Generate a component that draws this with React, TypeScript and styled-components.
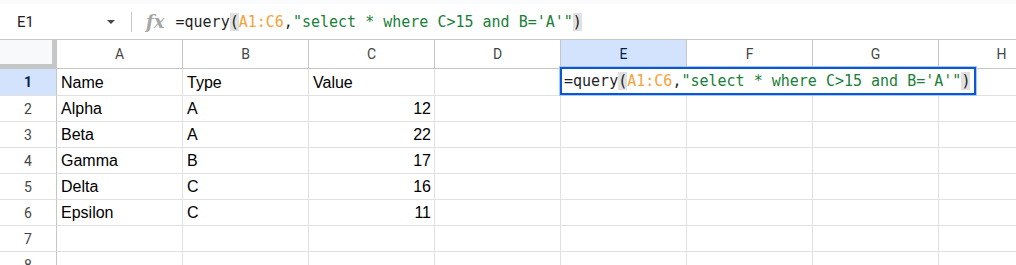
import React from 'react';
import styled, { createGlobalStyle } from 'styled-components';

const GlobalStyle = createGlobalStyle`
  html, body {
    margin: 0;
    padding: 0;
    background: #ffffff;
    overflow: hidden;
  }
  * { box-sizing: border-box; }
`;

const Page = styled.div`
  width: 1016px;
  height: 265px;
  overflow: hidden;
  font-family: Roboto, "Liberation Sans", Arial, sans-serif;
`;

const TopStrip = styled.div`
  height: 4px;
  background: #f9fbfd;
`;

const FormulaBar = styled.div`
  height: 36px;
  display: flex;
  align-items: center;
  border-bottom: 1px solid #c4c7c5;
  background: #ffffff;
`;

const NameBox = styled.div`
  width: 131px;
  display: flex;
  align-items: center;
  justify-content: space-between;
  padding: 0 16px 0 17px;
  font-size: 15px;
  color: #1f1f1f;
`;

const Caret = styled.span`
  width: 0;
  height: 0;
  border-left: 4px solid transparent;
  border-right: 4px solid transparent;
  border-top: 4px solid #444746;
`;

const Divider = styled.div`
  width: 1px;
  height: 20px;
  background: #c7c7c7;
`;

const Fx = styled.span`
  margin-left: 14px;
  font-family: "DejaVu Serif", "Liberation Serif", serif;
  font-style: italic;
  font-weight: 700;
  font-size: 18px;
  color: #a6a6a6;
  line-height: 1;
`;

const FormulaLine = styled.div`
  margin-left: 11px;
  font-family: "DejaVu Sans Mono", "Liberation Mono", monospace;
  font-size: 15px;
  white-space: pre;
  color: #1f1f1f;
`;

type TokKind = 'plain' | 'paren' | 'range' | 'string';

const Tok = styled.span<{ $kind: TokKind }>`
  color: ${(p) =>
    p.$kind === 'range' ? '#f6a23a' : p.$kind === 'string' ? '#188038' : '#1f1f1f'};
  background: ${(p) => (p.$kind === 'paren' ? '#e1e1e1' : 'transparent')};
`;

const Sheet = styled.div`
  display: grid;
  grid-template-columns: 57px repeat(8, 126px);
  grid-template-rows: 29px 27px repeat(7, 26px);
`;

const Corner = styled.div`
  background: #f8f9fa;
  border-right: 5px solid #c4c7c5;
  border-bottom: 5px solid #c4c7c5;
`;

const ColHeader = styled.div<{ $active?: boolean }>`
  display: flex;
  align-items: center;
  justify-content: center;
  font-size: 14px;
  color: ${(p) => (p.$active ? '#041e49' : '#444746')};
  background: ${(p) => (p.$active ? '#d3e3fd' : '#ffffff')};
  border-right: 1px solid #c4c7c5;
  border-bottom: 1px solid #c4c7c5;
`;

const RowHeader = styled.div<{ $active?: boolean }>`
  display: flex;
  align-items: center;
  justify-content: center;
  font-size: 14px;
  font-weight: ${(p) => (p.$active ? 700 : 400)};
  color: ${(p) => (p.$active ? '#041e49' : '#444746')};
  background: ${(p) => (p.$active ? '#d3e3fd' : '#ffffff')};
  border-right: 1px solid #c4c7c5;
  border-bottom: 1px solid #e1e1e1;
`;

const Cell = styled.div<{ $right?: boolean }>`
  position: relative;
  display: flex;
  align-items: center;
  justify-content: ${(p) => (p.$right ? 'flex-end' : 'flex-start')};
  padding: ${(p) => (p.$right ? '1px 3px 0 0' : '1px 0 0 4px')};
  font-family: "Liberation Sans", Arial, sans-serif;
  font-size: 16px;
  line-height: 18px;
  color: #000000;
  border-right: 1px solid #e1e1e1;
  border-bottom: 1px solid #e1e1e1;
  white-space: nowrap;
`;

const Editor = styled.div`
  position: absolute;
  left: -1px;
  top: -2px;
  width: 416px;
  height: 28px;
  z-index: 2;
  display: flex;
  align-items: center;
  padding-left: 2px;
  background: #ffffff;
  border: 2px solid #0b57d0;
  box-shadow: 0 0 0 1px #a8c7fa;
  font-family: "DejaVu Sans Mono", "Liberation Mono", monospace;
  font-size: 15px;
  white-space: pre;
`;

const tokens: { t: string; k: TokKind }[] = [
  { t: '=query', k: 'plain' },
  { t: '(', k: 'paren' },
  { t: 'A1:C6', k: 'range' },
  { t: ',', k: 'plain' },
  { t: `"select * where C>15 and B='A'"`, k: 'string' },
  { t: ')', k: 'paren' },
];

const Formula = () => (
  <>
    {tokens.map((tk, i) => (
      <Tok key={i} $kind={tk.k}>
        {tk.t}
      </Tok>
    ))}
  </>
);

const columns = ['A', 'B', 'C', 'D', 'E', 'F', 'G', 'H'];

const rows: (string | number)[][] = [
  ['Name', 'Type', 'Value'],
  ['Alpha', 'A', 12],
  ['Beta', 'A', 22],
  ['Gamma', 'B', 17],
  ['Delta', 'C', 16],
  ['Epsilon', 'C', 11],
  [],
  [],
];

export default function App() {
  return (
    <Page>
      <GlobalStyle />
      <TopStrip />
      <FormulaBar>
        <NameBox>
          E1
          <Caret />
        </NameBox>
        <Divider />
        <Fx>fx</Fx>
        <FormulaLine>
          <Formula />
        </FormulaLine>
      </FormulaBar>
      <Sheet>
        <Corner />
        {columns.map((c) => (
          <ColHeader key={c} $active={c === 'E'}>
            {c}
          </ColHeader>
        ))}
        {rows.map((r, ri) => (
          <React.Fragment key={ri}>
            <RowHeader $active={ri === 0}>{ri + 1}</RowHeader>
            {columns.map((c, ci) => {
              const v = r[ci];
              return (
                <Cell key={c} $right={typeof v === 'number'}>
                  {v}
                  {ri === 0 && c === 'E' && (
                    <Editor>
                      <Formula />
                    </Editor>
                  )}
                </Cell>
              );
            })}
          </React.Fragment>
        ))}
      </Sheet>
    </Page>
  );
}
